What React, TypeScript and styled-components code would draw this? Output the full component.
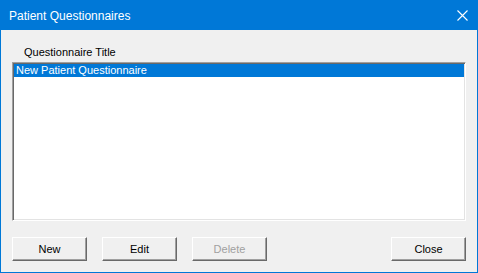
import React from 'react';
import styled, { createGlobalStyle } from 'styled-components';

const GlobalStyle = createGlobalStyle`
  html, body {
    margin: 0;
    padding: 0;
    background: #f0f0f0;
  }
  * {
    box-sizing: border-box;
  }
`;

const Window = styled.div`
  width: 478px;
  height: 273px;
  display: flex;
  flex-direction: column;
  border: 1px solid #0078d7;
  border-top: none;
  background: #f0f0f0;
  font-family: 'Liberation Sans', Arial, sans-serif;
  font-size: 11px;
  color: #000;
`;

const TitleBar = styled.div`
  height: 30px;
  flex: none;
  display: flex;
  align-items: center;
  justify-content: space-between;
  padding: 0 9px 0 8px;
  background: #0078d7;
  color: #fff;
  font-size: 12px;
`;

const TitleText = styled.span`
  padding-top: 1px;
`;

const CloseGlyph = styled.svg`
  width: 11px;
  height: 11px;
  display: block;
`;

const Body = styled.div`
  flex: 1;
  display: flex;
  flex-direction: column;
  padding: 16px 11px 11px 11px;
`;

const FieldLabel = styled.div`
  line-height: 13px;
  padding-left: 12px;
  margin-bottom: 3px;
`;

const ListBox = styled.div`
  height: 159px;
  background: #fff;
  border-style: solid;
  border-width: 1px;
  border-color: #a0a0a0 #fff #fff #a0a0a0;
  box-shadow: inset 1px 1px 0 #696969, inset -1px -1px 0 #e3e3e3;
  padding: 1px 1px;
`;

const ListRow = styled.div<{ $selected?: boolean }>`
  height: 13px;
  line-height: 13px;
  padding-left: 2px;
  background: ${(p) => (p.$selected ? '#0078d7' : 'transparent')};
  color: ${(p) => (p.$selected ? '#fff' : '#000')};
  white-space: nowrap;
`;

const ButtonRow = styled.div`
  display: flex;
  gap: 15px;
  margin-top: 16px;
`;

const Spacer = styled.div`
  flex: 1;
`;

const Button = styled.button`
  width: 75px;
  height: 24px;
  padding: 0;
  margin: 0;
  background: #f0f0f0;
  font-family: 'Liberation Sans', Arial, sans-serif;
  font-size: 11px;
  color: #000;
  border-style: solid;
  border-width: 1px;
  border-color: #fff #696969 #696969 #fff;
  box-shadow: inset -1px -1px 0 #a0a0a0;
  &:disabled {
    color: #a0a0a0;
  }
`;

export default function App() {
  return (
    <>
      <GlobalStyle />
      <Window>
        <TitleBar>
          <TitleText>Patient Questionnaires</TitleText>
          <CloseGlyph viewBox="0 0 11 11">
            <path d="M0.5 0.5 L10.5 10.5 M10.5 0.5 L0.5 10.5" stroke="#fff" strokeWidth="1.1" fill="none" />
          </CloseGlyph>
        </TitleBar>
        <Body>
          <FieldLabel>Questionnaire Title</FieldLabel>
          <ListBox>
            <ListRow $selected>New Patient Questionnaire</ListRow>
          </ListBox>
          <ButtonRow>
            <Button>New</Button>
            <Button>Edit</Button>
            <Button disabled>Delete</Button>
            <Spacer />
            <Button>Close</Button>
          </ButtonRow>
        </Body>
      </Window>
    </>
  );
}
